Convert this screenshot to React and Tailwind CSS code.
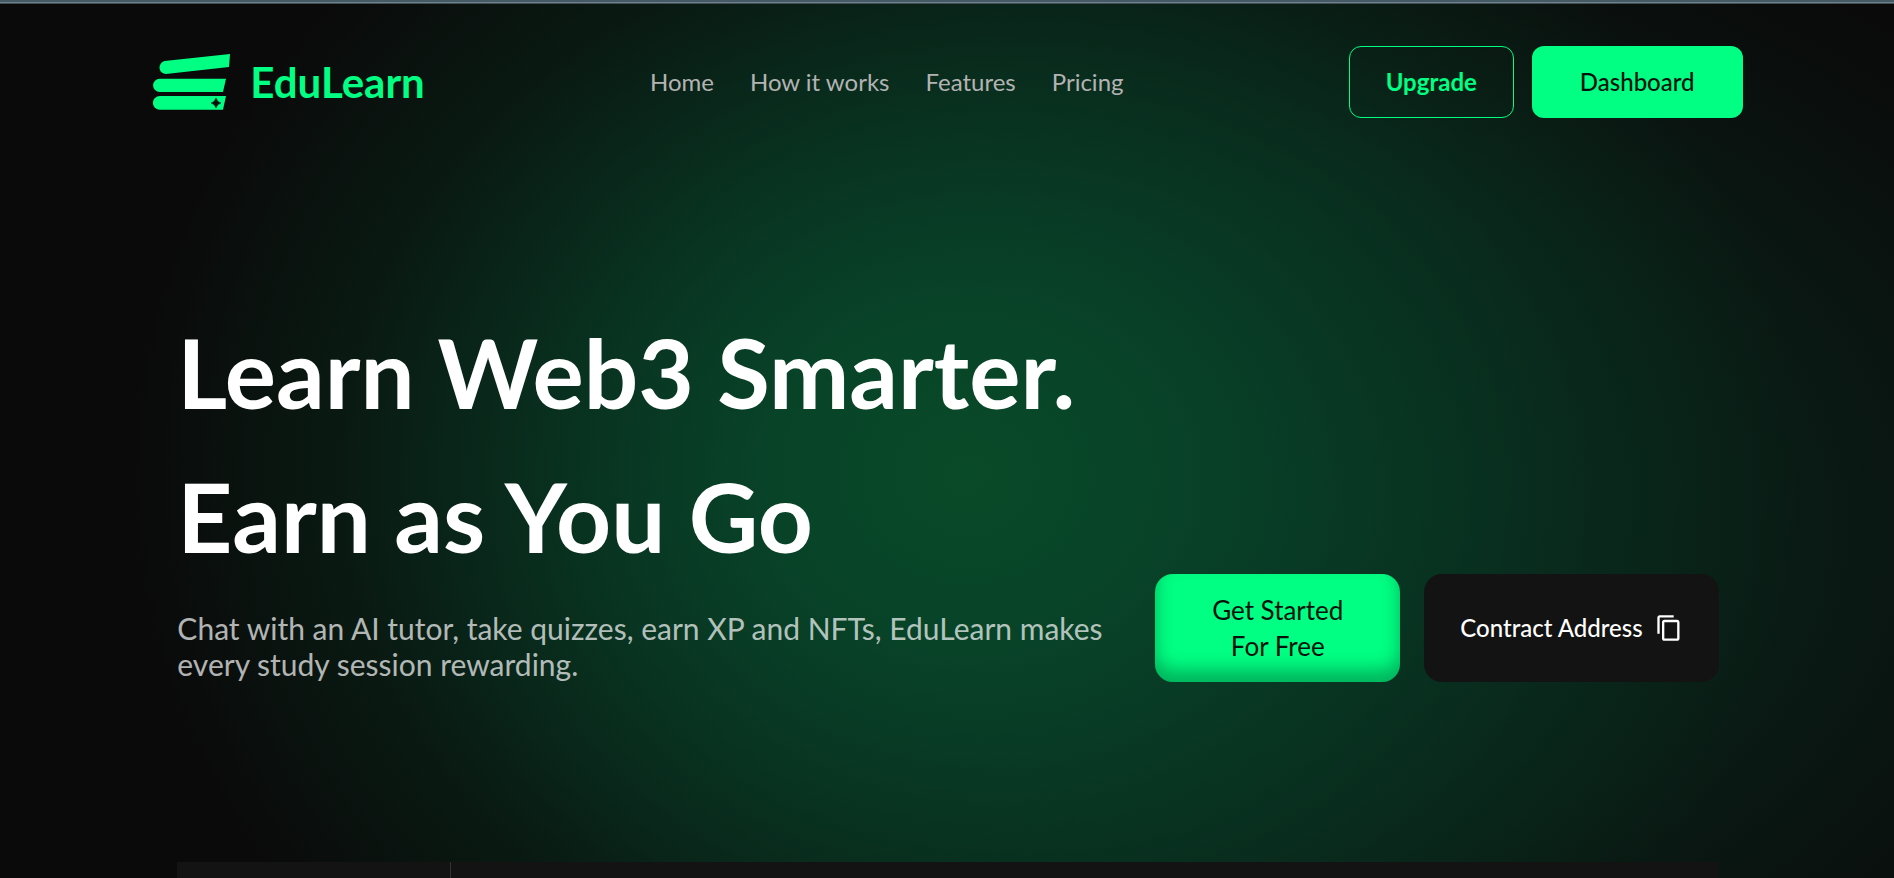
import React from "react";

import { MdContentCopy } from "react-icons/md";

const navLinks = [
  { label: "Home", href: "#home" },
  { label: "How it works", href: "#how-it-works" },
  { label: "Features", href: "#features" },
  { label: "Pricing", href: "#pricing" },
];

/* Stacked books with a small spark on the bottom one */
function LogoMark() {
  return (
    <svg
      width="77"
      height="56"
      viewBox="0 0 77 56"
      fill="#00ff83"
      aria-hidden="true"
    >
      <path d="M77 0 L76 13 L13 20 A6.6 6.6 0 0 1 11.5 7 Z" />
      <path d="M6.7 24.7 H73 L70 38 H6.7 A6.65 6.65 0 0 1 6.7 24.7 Z" />
      <path d="M6.8 42 H73 L70 55.8 H6.8 A6.9 6.9 0 0 1 6.8 42 Z" />
      <path
        d="M63 44 Q64 48 67.8 49 Q64 50 63 54 Q62 50 58.2 49 Q62 48 63 44 Z"
        fill="#0a0f0c"
        stroke="#0a0f0c"
        strokeWidth="0.6"
      />
    </svg>
  );
}

function Header() {
  return (
    <header className="flex items-center justify-between px-[8%] pt-[42px]">
      <a href="#home" className="flex items-center gap-5">
        <LogoMark />
        <span className="text-[42px] leading-[56px] font-bold text-[#00ff83]">
          EduLearn
        </span>
      </a>

      <nav className="flex gap-9">
        {navLinks.map((item) => (
          <a
            key={item.label}
            href={item.href}
            className="text-[24px] leading-9 text-[#b3b3b3] hover:text-white"
          >
            {item.label}
          </a>
        ))}
      </nav>

      <div className="flex gap-[18px]">
        <button className="h-[72px] rounded-xl border border-[#00ff83] px-9 text-[24px] font-bold text-[#00ff83]">
          Upgrade
        </button>
        <button className="h-[72px] rounded-xl bg-[#00ff83] px-12 text-[24px] font-medium text-[#06130c]">
          Dashboard
        </button>
      </div>
    </header>
  );
}

function Hero() {
  return (
    <section
      id="home"
      className="mx-[8%] flex items-end justify-between gap-8 px-6 pt-[182px]"
    >
      <div className="min-w-0 flex-1">
        <h1 className="text-[96px] leading-[144px] font-bold whitespace-nowrap text-white">
          Learn Web3 Smarter.
          <br />
          Earn as You Go
        </h1>
        <p className="mt-[22px] text-[30px] leading-9 text-white/70">
          Chat with an AI tutor, take quizzes, earn XP and NFTs, EduLearn makes
          every study session rewarding.
        </p>
      </div>

      <div className="flex gap-6">
        <button className="w-[245px] rounded-[18px] bg-[#00ff83] px-12 py-[18px] text-[26px] leading-9 text-[#06130c] shadow-[inset_0_-12px_18px_rgba(0,0,0,0.3)]">
          Get Started For Free
        </button>
        <button className="flex items-center gap-3 rounded-[18px] bg-[#131313] px-9 text-[24px] font-medium whitespace-nowrap text-white">
          Contract Address
          <MdContentCopy size={28} />
        </button>
      </div>
    </section>
  );
}

export default function App() {
  return (
    <div className="flex min-h-screen flex-col bg-[#0a0a0a] bg-[radial-gradient(ellipse_44%_82%_at_51%_54%,rgba(9,74,40,1)_0%,rgba(8,69,41,0.97)_22%,rgba(8,64,40,0.75)_45%,rgba(8,62,38,0.3)_75%,rgba(8,62,38,0)_100%),radial-gradient(ellipse_46%_74%_at_70%_60%,rgba(8,62,42,0.5)_0%,rgba(8,62,42,0.35)_50%,rgba(8,62,42,0)_100%)] pl-0.5 font-[Lato,sans-serif]">
      {/* Top edge */}
      <div className="-ml-0.5 h-1 border-b border-[#3f4e55] bg-[#455a64]">
        <div className="mt-0.5 h-px bg-[#6f838c]" />
      </div>

      <Header />
      <Hero />

      {/* Stats panel */}
      <section className="mx-[8%] mt-[180px] flex flex-1 px-6">
        <div className="flex flex-1 bg-[#131313]">
          <div className="w-[274px] border-r border-[#333333]" />
        </div>
      </section>
    </div>
  );
}
